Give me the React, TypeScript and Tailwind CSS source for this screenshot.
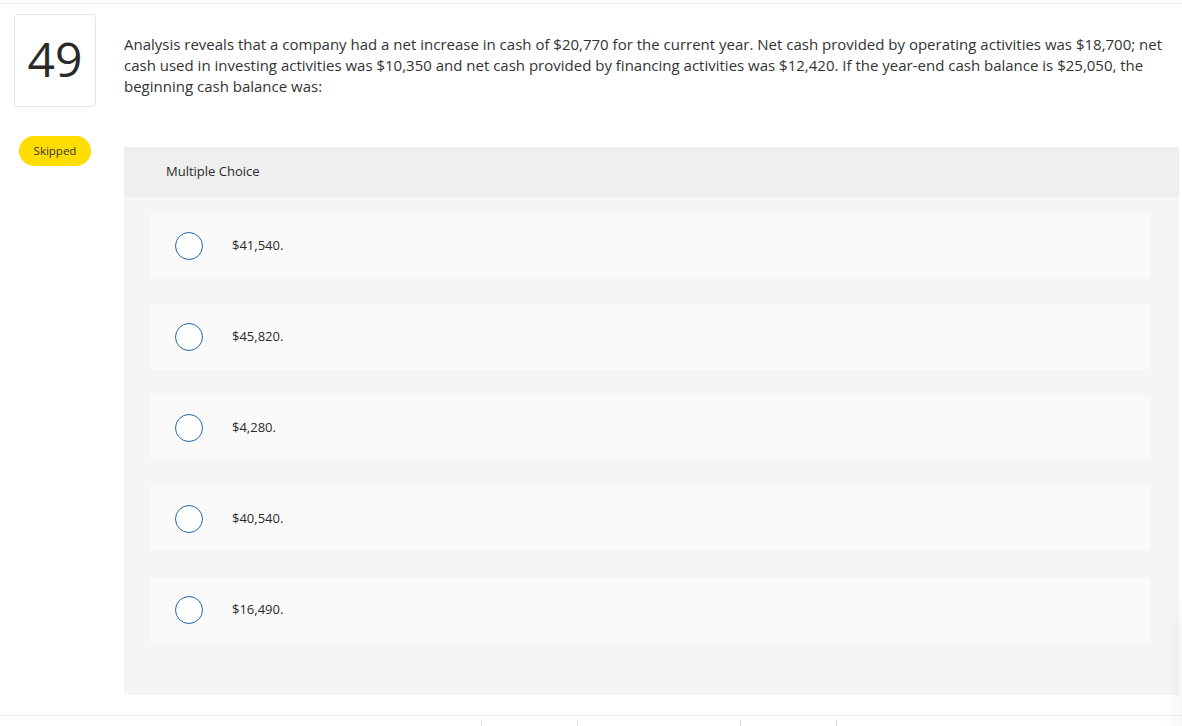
import React from "react";

const options = ["$41,540.", "$45,820.", "$4,280.", "$40,540.", "$16,490."];

export default function App() {
  return (
    <div
      className="relative w-[1182px] h-[726px] bg-white overflow-hidden text-[#333]"
      style={{ fontFamily: "'Open Sans', Lato, sans-serif" }}
    >
      <div className="mt-[3px] h-px bg-[#ececec]" />
      <div className="flex">
        <div className="w-[124px] shrink-0 pl-[14px] pt-[10px]">
          <div className="w-[82px] h-[93px] rounded-[4px] border border-[#e6e6e6] flex items-center justify-center">
            <span className="text-[48px] leading-none text-[#2a2a2a] -mt-[3px]">49</span>
          </div>
          <div className="mt-[29px] ml-[5px] w-[72px] h-[30px] rounded-full bg-[#ffdd00] flex items-center justify-center text-[11.5px] text-[#333]">
            Skipped
          </div>
        </div>
        <div className="flex-1 pt-[30px]">
          <p className="text-[15px] leading-[21px] pr-[8px] text-[#333]">
            Analysis reveals that a company had a net increase in cash of $20,770 for the current year. Net cash provided by operating activities was $18,700; net cash used in investing activities was $10,350 and net cash provided by financing activities was $12,420. If the year-end cash balance is $25,050, the beginning cash balance was:
          </p>
          <div className="mt-[50px] w-[1055px] bg-[#f5f5f5]">
            <div className="h-[50px] bg-[#efefef] flex items-center pl-[42px] text-[13px] text-[#2b2b2b]">
              Multiple Choice
            </div>
            <div className="pt-[16px] pb-[53px] pl-[26px] pr-[28px] flex flex-col gap-[26px]">
              {options.map((o) => (
                <div
                  key={o}
                  className="h-[65px] rounded-[3px] bg-[#fafafa] flex items-center pl-[25px]"
                >
                  <div className="w-[28px] h-[28px] rounded-full border-[1.5px] border-[#2566a8] bg-white" />
                  <span className="ml-[29px] text-[13px] text-[#2b2b2b]">{o}</span>
                </div>
              ))}
            </div>
          </div>
        </div>
      </div>
      <div className="mt-[20px] border-t border-[#ececec] h-[11px] flex items-end pl-[481px]">
        <div className="w-px h-[7px] bg-[#dcdcdc]" />
        <div className="ml-[95px] w-px h-[7px] bg-[#dcdcdc]" />
        <div className="ml-[162px] w-px h-[7px] bg-[#dcdcdc]" />
        <div className="ml-[95px] w-px h-[7px] bg-[#dcdcdc]" />
      </div>
      <div className="absolute right-[-30px] top-[610px] w-[30px] h-[150px] rounded-[20px] shadow-[0_0_24px_rgba(0,0,0,0.07)]" />
    </div>
  );
}
